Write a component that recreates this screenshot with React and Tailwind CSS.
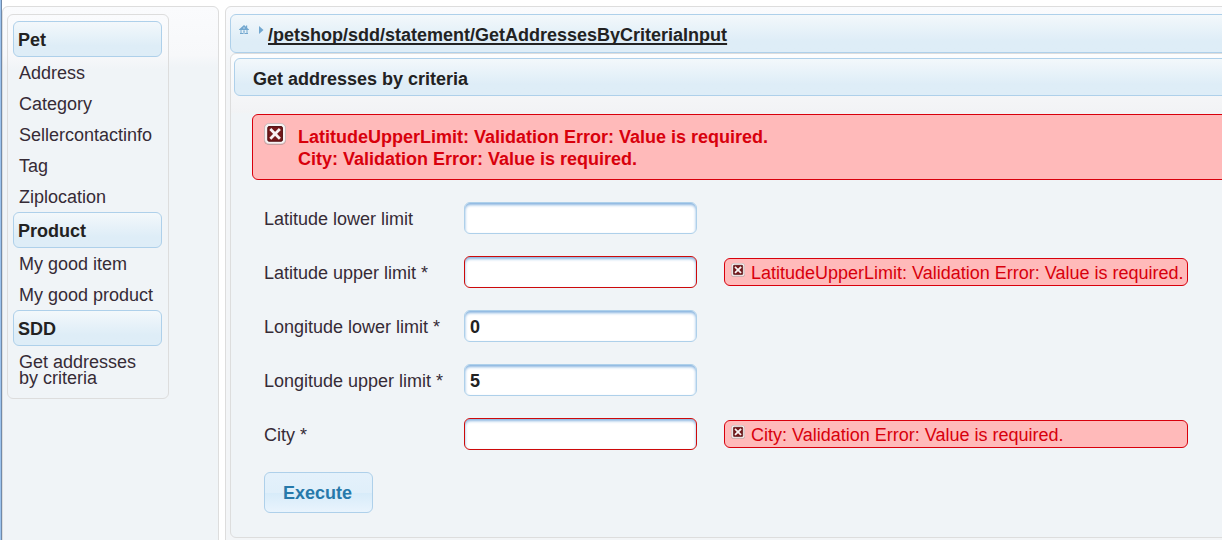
import React, { useState } from 'react';

const MENU = [
  { title: 'Pet', items: ['Address', 'Category', 'Sellercontactinfo', 'Tag', 'Ziplocation'] },
  { title: 'Product', items: ['My good item', 'My good product'] },
  { title: 'SDD', items: ['Get addresses by criteria'] },
];

const FIELDS = [
  { id: 'latitudeLower', label: 'Latitude lower limit' },
  {
    id: 'latitudeUpper',
    label: 'Latitude upper limit *',
    error: 'LatitudeUpperLimit: Validation Error: Value is required.',
  },
  { id: 'longitudeLower', label: 'Longitude lower limit *' },
  { id: 'longitudeUpper', label: 'Longitude upper limit *' },
  { id: 'city', label: 'City *', error: 'City: Validation Error: Value is required.' },
];

export default function App() {
  const [values, setValues] = useState({ longitudeLower: '0', longitudeUpper: '5' });
  const errors = FIELDS.filter((f) => f.error).map((f) => f.error);

  return (
    <div className="flex h-screen overflow-hidden bg-white font-['Liberation_Sans',Arial,sans-serif] text-lg text-[#362b36]">
      <div className="w-0.5 shrink-0 border-r border-[#7089a8] bg-[#9cc3ee]" />

      <aside className="mt-1.5 -mb-2 w-[217px] shrink-0 rounded-md border border-[#dddddd] bg-[#f0f4f7] bg-[linear-gradient(#fafbfd,#f7f8fa_48px,#f0f4f7_60px)] px-1 pt-[7px]">
        <nav className="w-[162px] rounded-md border border-[#dddddd] bg-[#f0f4f7] bg-[linear-gradient(#fafbfd,#f7f8fa_40px,#f0f4f7_54px)] pt-1.5 pr-1.5 pb-3 pl-[5px]">
          {MENU.map((group) => (
            <MenuGroup key={group.title} group={group} />
          ))}
        </nav>
      </aside>

      <main className="mt-1.5 -mr-4 -mb-2 ml-1.5 min-w-0 flex-1 rounded-md border border-[#dddddd] bg-[#f0f4f7] bg-[linear-gradient(#fafbfd,#f3f5f7_60px)] py-[7px] pl-1">
        <div className="flex h-[39px] items-center rounded-md border border-[#aed0ea] bg-linear-to-b from-[#f3f8fb] via-[#deedf7] via-70% to-[#deedf7] px-2">
          <a href="#home" aria-label="Home" className="mb-2">
            <HomeIcon />
          </a>
          <ArrowIcon />
          <a
            href="#statement"
            className="ml-1 pt-0.5 font-bold text-[#222222] underline decoration-2 underline-offset-2 [text-decoration-skip-ink:none]"
          >
            /petshop/sdd/statement/GetAddressesByCriteriaInput
          </a>
        </div>

        <section className="rounded-md border border-[#dddddd] bg-[#f0f4f7] bg-[linear-gradient(#fcfdfe,#f2f3f5_58px,#f0f4f7_60px)] pt-1 pb-6 pl-[3px]">
          <h2 className="flex h-[38px] items-center rounded-md border border-[#aed0ea] bg-linear-to-b from-[#f3f8fb] via-[#deedf7] via-70% to-[#deedf7] px-[18px] pt-1 font-bold text-[#222222]">
            Get addresses by criteria
          </h2>

          <form className="pt-[18px] pl-[18px]" noValidate onSubmit={(e) => e.preventDefault()}>
            <div role="alert" className="flex rounded-md border border-[#d8000c] bg-[#ffbaba] px-[11px] py-1.5">
              <ErrorIcon className="mt-0.5 size-[22px] shrink-0" />
              <ul className="ml-3 pt-[5px] pb-[3px]">
                {errors.map((error) => (
                  <li key={error} className="leading-[22px] font-bold text-[#d8000c]">
                    {error}
                  </li>
                ))}
              </ul>
            </div>

            <div className="mt-[22px] grid grid-cols-[200px_233px_max-content] items-center gap-y-[22px] pl-3">
              {FIELDS.map((field) => (
                <Field
                  key={field.id}
                  field={field}
                  value={values[field.id] || ''}
                  onChange={(value) => setValues({ ...values, [field.id]: value })}
                />
              ))}
            </div>

            <button
              type="submit"
              className="mt-[22px] ml-3 h-[41px] rounded-md border border-[#aed0ea] bg-[linear-gradient(#e4f1fb,#e0effa_50%,#d7ebf9_51%,#e9f4fd)] pr-5 pl-[18px] font-bold text-[#2779aa]"
            >
              Execute
            </button>
          </form>
        </section>
      </main>
    </div>
  );
}

function MenuGroup({ group }) {
  return (
    <div>
      <h3 className="flex h-9 items-center rounded-md border border-[#aed0ea] bg-linear-to-b from-[#f3f8fb] via-[#deedf7] via-70% to-[#deedf7] px-1 pt-0.5 font-bold text-[#222222]">
        {group.title}
      </h3>
      <ul>
        {group.items.map((item) => (
          <li key={item} className="min-h-[31px] px-1.5 pt-2 leading-4">
            <a href="#menu" className="block">
              {item}
            </a>
          </li>
        ))}
      </ul>
    </div>
  );
}

function Field({ field, value, onChange }) {
  const border = field.error ? 'border-[#cd0a0a]' : 'border-[#aed0ea]';

  return (
    <>
      <label htmlFor={field.id} className="pt-0.5">
        {field.label}
      </label>
      <input
        id={field.id}
        type="text"
        value={value}
        onChange={(e) => onChange(e.target.value)}
        className={`h-8 w-full rounded-md border bg-white px-[5px] pt-0.5 font-bold text-[#222222] shadow-[inset_0_2px_3px_#85b2df] outline-none ${border}`}
      />
      {field.error ? (
        <div className="ml-[27px] flex h-7 rounded-md border border-[#d8000c] bg-[#ffbaba] pr-[3px] pl-1.5 text-[#d8000c]">
          <ErrorIcon className="mt-1 size-3.5" />
          <span className="ml-1.5 pt-0.5 leading-6">{field.error}</span>
        </div>
      ) : (
        <span />
      )}
    </>
  );
}

function ErrorIcon({ className }) {
  return (
    <svg viewBox="0 0 22 22" className={className} aria-hidden="true">
      <rect x="0" y="0.5" width="22" height="21.5" rx="5" fill="#a87f7f" opacity="0.7" />
      <rect x="0.5" y="0.5" width="21" height="20.5" rx="4.5" fill="#f6f3f3" stroke="#cdb9b9" strokeWidth="0.8" />
      <rect x="3.8" y="3.6" width="14.6" height="14.6" rx="1.2" fill="#741a1c" stroke="#4e0a0c" strokeWidth="1" />
      <path d="M7.3 7.1L14.9 14.7M14.9 7.1L7.3 14.7" stroke="#f8f4f4" strokeWidth="2.8" strokeLinecap="square" />
    </svg>
  );
}

function HomeIcon() {
  return (
    <svg width="10" height="9" viewBox="0 0 10 9" fill="#72a7cf" aria-hidden="true">
      <path d="M5 0L7 1.8V0.6h1.2V3L10 4.6V5H0V4.6z" />
      <path d="M1.4 5h1.2v4H1.4zM7.4 5h1.2v4H7.4zM4 5.6h2V9H4z" opacity="0.8" />
      <path d="M1 8h8v1H1z" />
      <path d="M4.3 2.6h1.4v1H4.3zM4.6 6.4h0.8V9h-0.8z" fill="#e6f1f8" />
    </svg>
  );
}

function ArrowIcon() {
  return (
    <svg width="5" height="8" viewBox="0 0 5 8" className="mb-2 ml-2.5" aria-hidden="true">
      <path d="M0 0L4.5 4L0 8z" fill="#72a7cf" />
    </svg>
  );
}
